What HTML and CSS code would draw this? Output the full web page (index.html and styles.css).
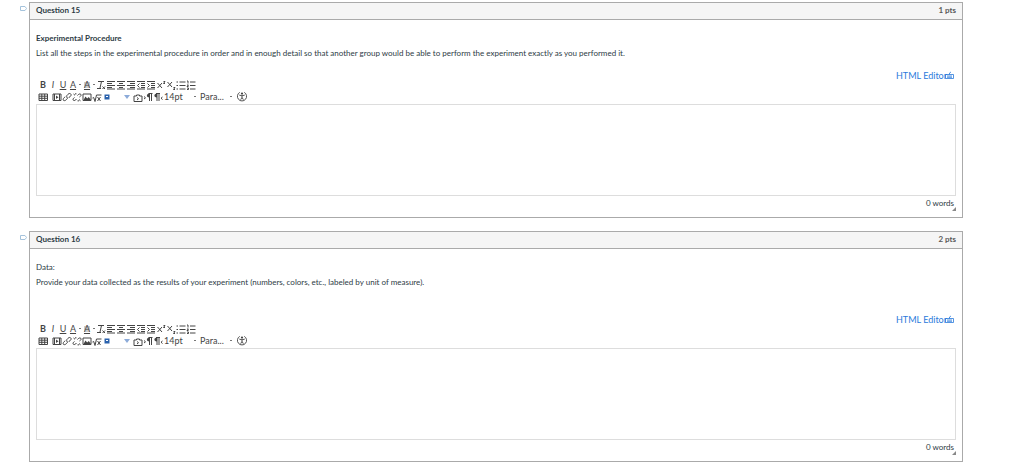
FILE: index.html
```
<!DOCTYPE html>
<html lang="en">
<head>
  <meta charset="UTF-8" />
  <title>Quiz</title>
  <meta name="viewport" content="width=device-width, initial-scale=1.0" />
  <link rel="stylesheet" href="styles.css">
</head>
<body>

<svg class="sprite" aria-hidden="true">
  <symbol id="i-flag" viewBox="0 0 7 6"><path d="M.5 .5h4.500L6.500 2.500 5 4.500H.5z"/></symbol>
  <symbol id="i-clear" viewBox="0 0 10 10"><path d="M2 1.500h6M5.500 1.500L4 8M1 8.500h4M6.500 6.500l2.500 2.500M9 6.500L6.500 9"/></symbol>
  <symbol id="i-left" viewBox="0 0 10 10"><path d="M1 1.500h8M1 3.500h5M1 5.500h8M1 7.500h5M1 9h8"/></symbol>
  <symbol id="i-center" viewBox="0 0 10 10"><path d="M1 1.500h8M3 3.500h4M1 5.500h8M3 7.500h4M1 9h8"/></symbol>
  <symbol id="i-right" viewBox="0 0 10 10"><path d="M1 1.500h8M4 3.500h5M1 5.500h8M4 7.500h5M1 9h8"/></symbol>
  <symbol id="i-outdent" viewBox="0 0 10 10"><path d="M1 1.500h8M5 3.500h4M5 5.500h4M5 7.500h4M1 9h8M3.500 3.500L1.500 5.500l2 2"/></symbol>
  <symbol id="i-indent" viewBox="0 0 10 10"><path d="M1 1.500h8M5 3.500h4M5 5.500h4M5 7.500h4M1 9h8M1.500 3.500l2 2-2 2"/></symbol>
  <symbol id="i-sup" viewBox="0 0 10 10"><path d="M1.500 3l4.500 5M6 3L1.500 8M7.500 1.500h1.500L7.500 3.500h1.500"/></symbol>
  <symbol id="i-sub" viewBox="0 0 10 10"><path d="M1.500 2l4.500 5M6 2L1.500 7M7.500 7.500h1.500L7.500 9.500h1.500"/></symbol>
  <symbol id="i-bullets" viewBox="0 0 10 10"><path d="M.5 2h1.500M.5 5.500h1.500M.5 9h1.500M3.500 2h6M3.500 5.500h6M3.500 9h6"/></symbol>
  <symbol id="i-numbers" viewBox="0 0 10 10"><path d="M1 1h1v2.500M1 5h1.500L1 6.500h1.500M1 8h1.500v1.500H1M4 2h5.500M4 5.500h5.500M4 9h5.500"/></symbol>
  <symbol id="i-table" viewBox="0 0 10 10"><path d="M1 2h8.500v6.500H1zM1 4.200h8.500M1 6.300h8.500M3.800 2v6.500M6.700 2v6.500"/></symbol>
  <symbol id="i-media" viewBox="0 0 10 10"><path d="M1 2h8v6.500H1zM2.500 2v6.500M7.500 2v6.500"/><path class="fill" d="M4 3.500l2.500 1.700L4 7z"/></symbol>
  <symbol id="i-link" viewBox="0 0 10 10"><path d="M4.500 5.500C3.500 4.500 5 3.500 6 2.300s2.500-1 3 0-.5 2.200-2 3.200M5.500 4.800c1 1-.5 2-1.300 3S1.500 9 1.200 8s.5-2.200 1.800-3"/></symbol>
  <symbol id="i-unlink" viewBox="0 0 10 10"><path d="M5.500 3.500c1-1.500 2.500-2 3.300-1.200s0 2-1.300 2.700M4.500 7C3.500 8.500 2 9 1.300 8.200s0-2 1.200-2.700M1.500 2l1.500 1.300M3.800 1v1.500M8.500 8.800L7 7.500M6.200 9.500V8"/></symbol>
  <symbol id="i-image" viewBox="0 0 10 10"><path d="M1 2h8v6.500H1z"/><path class="fill" d="M1.500 8l2-3.500 1.700 2L6.800 5 9 8z"/></symbol>
  <symbol id="i-math" viewBox="0 0 10 10"><path d="M.5 6l1.200-.5L3 9.500 4.500 3h5M5.500 5l3 4M8.500 5l-3 4"/></symbol>
  <symbol id="i-app" viewBox="0 0 10 10"><path class="blue" d="M2.500 2.500h5v5h-5z"/><path class="spot" d="M4 4.500h2"/></symbol>
  <symbol id="i-embed" viewBox="0 0 10 10"><path d="M1 4h2.500V3h3v1H9v5.500H1zM4 5.500l1.500 1.200L4 8"/></symbol>
  <symbol id="i-ltr" viewBox="0 0 10 10"><path d="M5.500 1.500h4M6.500 1.500V9M8.500 1.500V9M1 4.500l1.500 1.300L1 7"/><path class="fill" d="M6.500 1.500c-3.500 0-3.500 4 0 4z"/></symbol>
  <symbol id="i-rtl" viewBox="0 0 10 10"><path d="M3 1.500h4M4 1.500V9M6 1.500V9M9.500 5L8 6.200 9.500 7.500"/><path class="fill" d="M4 1.500c-3.500 0-3.500 4 0 4z"/></symbol>
  <symbol id="i-access" viewBox="0 0 12 12"><path d="M3.500 1.500a5 5 0 1 0 5 0M3 4.500L6 5.200l3-.7M6 5v2L4.500 9.500M6 7l1.500 2.500"/><circle class="fill" cx="6" cy="2.800" r="1.200"/></symbol>
  <symbol id="i-keyboard" viewBox="0 0 9 9"><path d="M.5 3.500h8v4h-8zM4.500 3.500V2L6 1M2 5h5M2 6.300h5"/></symbol>
</svg>

<main class="quiz">
  <div class="question">
    <button class="flag" type="button" aria-label="Flag question 15"><svg><use href="#i-flag"/></svg></button>
    <div class="header">
      <span>Question 15</span>
      <span class="points">1 pts</span>
    </div>
    <div class="text">
      <p><strong>Experimental Procedure</strong></p>
      <p>List all the steps in the experimental procedure in order and in enough detail so that another group would be able to perform the experiment exactly as you performed it.</p>
      <div class="editor-links">
        <a href="#">HTML Editor</a>
        <button type="button" aria-label="Keyboard shortcuts"><svg><use href="#i-keyboard"/></svg></button>
      </div>
      <div class="toolbar"></div>
      <textarea class="answer" aria-label="Answer to question 15"></textarea>
      <div class="status">0 words</div>
    </div>
  </div>

  <div class="question">
    <button class="flag" type="button" aria-label="Flag question 16"><svg><use href="#i-flag"/></svg></button>
    <div class="header">
      <span>Question 16</span>
      <span class="points">2 pts</span>
    </div>
    <div class="text">
      <p>Data:</p>
      <p>Provide your data collected as the results of your experiment (numbers, colors, etc., labeled by unit of measure).</p>
      <p>&nbsp;</p>
      <div class="editor-links">
        <a href="#">HTML Editor</a>
        <button type="button" aria-label="Keyboard shortcuts"><svg><use href="#i-keyboard"/></svg></button>
      </div>
      <div class="toolbar"></div>
      <textarea class="answer" aria-label="Answer to question 16"></textarea>
      <div class="status">0 words</div>
    </div>
  </div>
</main>

<template id="toolbarTemplate">
  <div class="row">
    <button type="button" aria-label="Bold"><b>B</b></button>
    <button type="button" aria-label="Italic"><i>I</i></button>
    <button type="button" aria-label="Underline"><u>U</u></button>
    <button class="color" type="button" aria-label="Text color">A</button>
    <button class="caret" type="button" aria-label="Text colors"></button>
    <button class="color marker" type="button" aria-label="Background color">A</button>
    <button class="caret" type="button" aria-label="Background colors"></button>
    <button type="button" aria-label="Clear formatting"><svg><use href="#i-clear"/></svg></button>
    <button type="button" aria-label="Align left"><svg><use href="#i-left"/></svg></button>
    <button type="button" aria-label="Align center"><svg><use href="#i-center"/></svg></button>
    <button type="button" aria-label="Align right"><svg><use href="#i-right"/></svg></button>
    <button type="button" aria-label="Outdent"><svg><use href="#i-outdent"/></svg></button>
    <button type="button" aria-label="Indent"><svg><use href="#i-indent"/></svg></button>
    <button type="button" aria-label="Superscript"><svg><use href="#i-sup"/></svg></button>
    <button type="button" aria-label="Subscript"><svg><use href="#i-sub"/></svg></button>
    <button type="button" aria-label="Bullet list"><svg><use href="#i-bullets"/></svg></button>
    <button type="button" aria-label="Numbered list"><svg><use href="#i-numbers"/></svg></button>
  </div>
  <div class="row">
    <button class="table" type="button" aria-label="Table"><svg><use href="#i-table"/></svg></button>
    <button type="button" aria-label="Media"><svg><use href="#i-media"/></svg></button>
    <button type="button" aria-label="Link"><svg><use href="#i-link"/></svg></button>
    <button type="button" aria-label="Unlink"><svg><use href="#i-unlink"/></svg></button>
    <button type="button" aria-label="Image"><svg><use href="#i-image"/></svg></button>
    <button type="button" aria-label="Equation"><svg><use href="#i-math"/></svg></button>
    <button type="button" aria-label="Apps"><svg><use href="#i-app"/></svg></button>
    <button class="more" type="button" aria-label="More tools"></button>
    <button type="button" aria-label="Embed"><svg><use href="#i-embed"/></svg></button>
    <button type="button" aria-label="Left to right"><svg><use href="#i-ltr"/></svg></button>
    <button type="button" aria-label="Right to left"><svg><use href="#i-rtl"/></svg></button>
    <span class="picker"><select aria-label="Font size"><option>14pt</option></select></span>
    <span class="picker"><select aria-label="Block format"><option>Para...</option></select></span>
    <button class="access" type="button" aria-label="Check accessibility"><svg><use href="#i-access"/></svg></button>
  </div>
</template>

<script>
  const template = document.getElementById("toolbarTemplate");
  document.querySelectorAll(".toolbar").forEach(bar => {
    bar.appendChild(template.content.cloneNode(true));
  });
</script>

</body>
</html>
```
FILE: styles.css
```
body {
  margin: 0;
  background: #fff;
  color: #2d3b45;
  font-family: Lato, sans-serif;
  font-size: 8px;
  line-height: 15px;
}

button {
  display: flex;
  align-items: center;
  justify-content: center;
  padding: 0;
  border: 0;
  background: none;
  color: inherit;
  font: inherit;
  cursor: pointer;
}

svg {
  fill: none;
  stroke: currentColor;
  stroke-width: 1;
}

.sprite {
  display: none;
}

.fill {
  fill: currentColor;
  stroke: none;
}

.blue {
  fill: #2b62ad;
  stroke: none;
}

.spot {
  stroke: #fff;
}

.quiz {
  display: flex;
  flex-direction: column;
  gap: 13px;
  padding: 2px 61px 6px 29px;
}

.question {
  position: relative;
  border: 1px solid #aaa;
}

.flag {
  position: absolute;
  top: 3px;
  left: -10px;
  color: #a5c3dc;
}

.flag svg {
  width: 7px;
  height: 6px;
}

.header {
  display: flex;
  justify-content: space-between;
  padding: 0 6px 1px;
  background: #f5f5f5;
  border-bottom: 1px solid #aaa;
  font-weight: bold;
  line-height: 15px;
}

.points {
  color: #595959;
}

.text {
  padding: 11px 6px 8px;
}

p {
  margin: 0;
}

.editor-links {
  display: flex;
  justify-content: flex-end;
  margin: 10px 0 -1px;
  padding-right: 2px;
  color: #2a7adb;
  font-size: 9px;
  line-height: 9px;
}

.editor-links a {
  color: inherit;
  text-decoration: none;
}

.editor-links button {
  margin-left: -2px;
}

.editor-links svg {
  width: 9px;
  height: 9px;
  stroke-width: 0.8;
}

.toolbar {
  display: flex;
  flex-direction: column;
  gap: 1px;
  padding: 0 2px 2px;
  color: #444;
}

.row {
  display: flex;
  align-items: center;
  height: 11px;
  font-size: 9px;
  line-height: 11px;
}

.row button {
  width: 10px;
  height: 11px;
}

.row svg {
  width: 10px;
  height: 10px;
}

.row .color {
  text-decoration: underline;
}

.row .marker {
  background: linear-gradient(#ccc, #ccc) center / 6px 6px no-repeat;
}

.row .caret {
  width: 4px;
}

.caret::before,
.picker::after {
  content: "";
  width: 2px;
  height: 1px;
  background: #777;
}

.row .table {
  justify-content: flex-start;
  width: 14px;
}

.row .more {
  width: 21px;
  padding-left: 8px;
}

.more::before {
  content: "";
  border: 3px solid transparent;
  border-top: 4px solid #8cabd9;
  border-bottom: 0;
}

.picker {
  display: flex;
  align-items: center;
  width: 33px;
  padding-left: 1px;
  box-sizing: border-box;
}

.picker + .picker {
  margin-left: 3px;
}

.picker select {
  flex: 1;
  min-width: 0;
  padding: 0;
  border: 0;
  appearance: none;
  background: none;
  color: inherit;
  font: inherit;
}

.row .access {
  width: 20px;
}

.access svg {
  width: 12px;
  height: 11px;
}

.answer {
  display: block;
  box-sizing: border-box;
  width: 100%;
  height: 92px;
  border: 1px solid #ddd;
  resize: none;
  font: inherit;
}

.status {
  position: relative;
  padding: 2px 2px 0 0;
  line-height: 11px;
  text-align: right;
}

.status::after {
  content: "";
  position: absolute;
  right: 0;
  bottom: -2px;
  border: 2px solid transparent;
  border-right-color: #888;
  border-bottom-color: #888;
}
```
